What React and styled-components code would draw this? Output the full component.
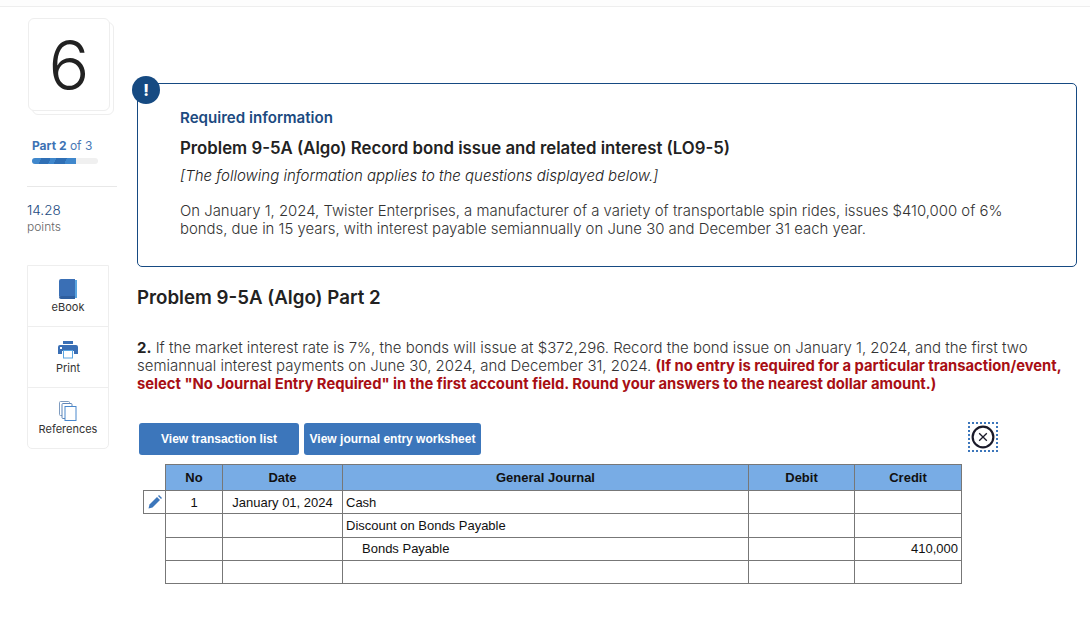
import React from "react";
import styled, { createGlobalStyle } from "styled-components";

const GlobalStyle = createGlobalStyle`
  html, body { margin: 0; padding: 0; background: #fff; }
  body { font-family: Inter, Lato, sans-serif; color: #222; }
`;

const TopRule = styled.div`
  height: 6px;
  background: #fdfdfd;
  border-bottom: 1px solid #eeeeee;
`;

const Page = styled.div`
  display: flex;
  width: 1090px;
  height: 612px;
  overflow: hidden;
`;

const Sidebar = styled.aside`
  width: 90px;
  margin-left: 27px;
  flex: none;
  display: flex;
  flex-direction: column;
  padding-top: 11px;
`;

const NumberStack = styled.div`
  position: relative;
  width: 82px;
  height: 93px;
  margin-left: 1px;
`;

const NumberBack = styled.div`
  position: absolute;
  left: 4px;
  top: 4px;
  width: 82px;
  height: 93px;
  box-sizing: border-box;
  background: #fff;
  border: 1px solid #eeeeee;
  border-radius: 6px;
`;

const NumberCard = styled.div`
  position: absolute;
  inset: 0;
  box-sizing: border-box;
  background: #fff;
  border: 1px solid #eeeeee;
  border-radius: 6px;
  display: flex;
  align-items: center;
  justify-content: center;
  font-size: 68px;
  font-weight: 350;
  line-height: 1;
  color: #222;
`;

const PartLabel = styled.div`
  margin: 27px 0 0 5px;
  font-size: 12px;
  line-height: 16px;
  color: #4a78b5;
  strong { font-weight: 700; color: #3d72b4; }
`;

const Progress = styled.div`
  width: 66px;
  height: 6px;
  margin: 4px 0 0 5px;
  border-radius: 3px;
  background: #f0f0f0;
  overflow: hidden;
`;

const ProgressFill = styled.div`
  height: 100%;
  background: linear-gradient(115deg, #3f87cc 0 20%, #2f6fb5 20% 40%, #3f87cc 40% 52%, #2f6fb5 52% 75%, #3f87cc 75%);
`;

const SideRule = styled.hr`
  width: 90px;
  margin: 22px 0 0;
  border: 0;
  border-top: 1px solid #e8e8e8;
`;

const Points = styled.div`
  margin-top: 15px;
  font-size: 13.500px;
  font-weight: 350;
  line-height: 17px;
  color: #1b4a80;
  span { display: block; color: #666; font-size: 12px; line-height: 15px; }
`;

const ToolBox = styled.div`
  width: 82px;
  margin: 31px 0 0 0;
  box-sizing: border-box;
  border: 1px solid #eeeeee;
  border-radius: 0 0 5px 5px;
`;

const ToolItem = styled.div`
  height: 61px;
  display: flex;
  flex-direction: column;
  align-items: center;
  padding-top: 12px;
  box-sizing: border-box;
  font-size: 11px;
  line-height: 14px;
  color: #333;
  &:first-child { height: 60px; }
  & + & { border-top: 1px solid #eeeeee; }
`;

const ToolGlyph = styled.div`
  height: 22px;
  display: flex;
  align-items: center;
  justify-content: center;
`;

const Main = styled.main`
  flex: 1;
  min-width: 0;
  padding: 76px 13px 0 20px;
`;

const InfoBox = styled.section`
  position: relative;
  box-sizing: border-box;
  height: 184px;
  padding: 24px 42px 0;
  border: 1px solid #164a82;
  border-radius: 5px;
`;

const AlertBadge = styled.div`
  position: absolute;
  left: -6px;
  top: -8px;
  width: 28px;
  height: 28px;
  border-radius: 50%;
  background: #164a82;
  color: #fff;
  font-size: 16px;
  font-weight: 800;
  line-height: 28px;
  text-align: center;
`;

const InfoEyebrow = styled.div`
  font-size: 15.100px;
  font-weight: 600;
  line-height: 20px;
  color: #1b4a80;
`;

const InfoTitle = styled.h2`
  margin: 9px 0 0;
  font-size: 16.800px;
  font-weight: 600;
  line-height: 22px;
  color: #222;
`;

const InfoNote = styled.p`
  margin: 7px 0 0;
  font-size: 14.990px;
  font-style: italic;
  font-weight: 300;
  line-height: 20px;
  color: #222;
`;

const InfoBody = styled.p`
  margin: 17px 0 0;
  font-size: 14.900px;
  font-weight: 350;
  line-height: 17.500px;
  color: #333;
`;

const PartTitle = styled.h1`
  margin: 19px 0 0;
  font-size: 18.700px;
  font-weight: 600;
  line-height: 24px;
  color: #222;
`;

const Question = styled.p`
  margin: 28px 0 0;
  padding-top: 1px;
  font-size: 14.970px;
  font-weight: 350;
  line-height: 18px;
  color: #333;
  b { color: #222; font-weight: 700; }
  strong { color: #a80f14; font-weight: 700; font-size: 14.770px; }
`;

const ButtonRow = styled.div`
  display: flex;
  align-items: center;
  gap: 5px;
  margin: 30px 0 0 2px;
  height: 32px;
`;

const ActionButton = styled.button`
  height: 32px;
  width: ${(p) => p.$width}px;
  padding: 0;
  border: 0;
  border-radius: 3px;
  background: #3c76bb;
  color: #fff;
  font-family: "Liberation Sans", Arial, sans-serif;
  font-size: 12px;
  font-weight: 700;
`;

const CloseBox = styled.div`
  width: 30px;
  height: 30px;
  margin: -4px 79px 0 auto;
  box-sizing: border-box;
  border: 2px dotted #3c76bb;
  display: flex;
  align-items: center;
  justify-content: center;
`;

const Journal = styled.table`
  margin: 9px 0 0 6px;
  border-collapse: collapse;
  table-layout: fixed;
  width: 819px;
  font-family: "Liberation Sans", Arial, sans-serif;
  font-size: 13px;
  color: #111;
`;

const Head = styled.th`
  height: 25px;
  padding: 0;
  background: #78ace5;
  border: 1px solid #777;
  font-weight: 700;
  font-size: 13px;
`;

const Cell = styled.td`
  height: 22.300px;
  padding: 0 3px 0 ${(p) => p.$indent || 3}px;
  border: 1px solid #777;
  text-align: ${(p) => p.$align || "left"};
`;

const EditCell = styled.td`
  padding: 0;
  text-align: center;
  vertical-align: middle;
  border: ${(p) => (p.$framed ? "1px solid #777" : "0")};
  svg { display: block; margin: 0 auto; }
`;

const BookIcon = () => (
  <svg width="18" height="20" viewBox="0 0 18 20">
    <path d="M3 1h15v18h-3V3H3z" fill="#5aa5e0" />
    <path d="M0 2a2 2 0 0 1 2-2h14v17H2a2 2 0 0 0-2 1z" fill="#3a6fb5" />
    <path d="M0 18a2 2 0 0 1 2-1h14v3H2a2 2 0 0 1-2-2z" fill="#2f5f9f" />
  </svg>
);

const PrintIcon = () => (
  <svg width="20" height="18" viewBox="0 0 20 18">
    <rect x="5" y="0" width="10" height="3" fill="#3a6fb5" />
    <path d="M2 4h16a2 2 0 0 1 2 2v7h-4v-3H4v3H0V6a2 2 0 0 1 2-2z" fill="#3a6fb5" />
    <rect x="2" y="6" width="2" height="2" fill="#fff" />
    <rect x="5.500" y="9.500" width="9" height="7.500" fill="#fff" stroke="#5aa5e0" />
  </svg>
);

const RefsIcon = () => (
  <svg width="19" height="20" viewBox="0 0 19 20" fill="#fff">
    <rect x="0.500" y="0.500" width="10" height="14" rx="1" stroke="#7f9cc0" />
    <rect x="3" y="2.500" width="10" height="15" rx="1" stroke="#5f86b8" />
    <rect x="6" y="5.500" width="11" height="14" stroke="#4a88cc" />
  </svg>
);

const PencilIcon = () => (
  <svg width="14" height="14" viewBox="0 0 14 14">
    <path d="M0.500 13.500l1-4 7.500-7.500 3 3-7.500 7.500z" fill="#3c76bb" />
    <path d="M10 1l1-1 3 3-1 1z" fill="#3c76bb" />
  </svg>
);

const CloseIcon = () => (
  <svg width="24" height="24" viewBox="0 0 22 22" fill="none" stroke="#1a1a2a">
    <circle cx="11" cy="11" r="9.500" strokeWidth="2" />
    <path d="M7.500 7.500l7 7M14.500 7.500l-7 7" strokeWidth="1.200" />
  </svg>
);

const rows = [
  { no: "1", date: "January 01, 2024", account: "Cash" },
  { account: "Discount on Bonds Payable" },
  { account: "Bonds Payable", indent: 19, credit: "410,000" },
  {},
];

export default function App() {
  return (
    <>
      <GlobalStyle />
      <TopRule />
      <Page>
        <Sidebar>
          <NumberStack>
            <NumberBack />
            <NumberCard>6</NumberCard>
          </NumberStack>
          <PartLabel>
            <strong>Part 2</strong> of 3
          </PartLabel>
          <Progress>
            <ProgressFill style={{ width: `${(2 / 3) * 100}%` }} />
          </Progress>
          <SideRule />
          <Points>
            14.28
            <span>points</span>
          </Points>
          <ToolBox>
            <ToolItem>
              <ToolGlyph><BookIcon /></ToolGlyph>
              eBook
            </ToolItem>
            <ToolItem>
              <ToolGlyph><PrintIcon /></ToolGlyph>
              Print
            </ToolItem>
            <ToolItem>
              <ToolGlyph><RefsIcon /></ToolGlyph>
              References
            </ToolItem>
          </ToolBox>
        </Sidebar>
        <Main>
          <InfoBox>
            <AlertBadge>!</AlertBadge>
            <InfoEyebrow>Required information</InfoEyebrow>
            <InfoTitle>Problem 9-5A (Algo) Record bond issue and related interest (LO9-5)</InfoTitle>
            <InfoNote>[The following information applies to the questions displayed below.]</InfoNote>
            <InfoBody>
              On January 1, 2024, Twister Enterprises, a manufacturer of a variety of transportable spin rides, issues $410,000 of 6%
              <br />
              bonds, due in 15 years, with interest payable semiannually on June 30 and December 31 each year.
            </InfoBody>
          </InfoBox>
          <PartTitle>Problem 9-5A (Algo) Part 2</PartTitle>
          <Question>
            <b>2.</b> If the market interest rate is 7%, the bonds will issue at $372,296. Record the bond issue on January 1, 2024, and the first two
            <br />
            semiannual interest payments on June 30, 2024, and December 31, 2024.{" "}
            <strong>
              (If no entry is required for a particular transaction/event,
              <br />
              select "No Journal Entry Required" in the first account field. Round your answers to the nearest dollar amount.)
            </strong>
          </Question>
          <ButtonRow>
            <ActionButton $width={160}>View transaction list</ActionButton>
            <ActionButton $width={177}>View journal entry worksheet</ActionButton>
            <CloseBox>
              <CloseIcon />
            </CloseBox>
          </ButtonRow>
          <Journal>
            <colgroup>
              <col style={{ width: 22 }} />
              <col style={{ width: 57 }} />
              <col style={{ width: 120 }} />
              <col style={{ width: 406 }} />
              <col style={{ width: 106 }} />
              <col style={{ width: 107 }} />
            </colgroup>
            <thead>
              <tr>
                <EditCell as="th" />
                <Head>No</Head>
                <Head>Date</Head>
                <Head>General Journal</Head>
                <Head>Debit</Head>
                <Head>Credit</Head>
              </tr>
            </thead>
            <tbody>
              {rows.map((row, i) => (
                <tr key={i}>
                  <EditCell $framed={i === 0}>{i === 0 && <PencilIcon />}</EditCell>
                  <Cell $align="center">{row.no}</Cell>
                  <Cell $align="center">{row.date}</Cell>
                  <Cell $indent={row.indent}>{row.account}</Cell>
                  <Cell $align="right" />
                  <Cell $align="right">{row.credit}</Cell>
                </tr>
              ))}
            </tbody>
          </Journal>
        </Main>
      </Page>
    </>
  );
}
